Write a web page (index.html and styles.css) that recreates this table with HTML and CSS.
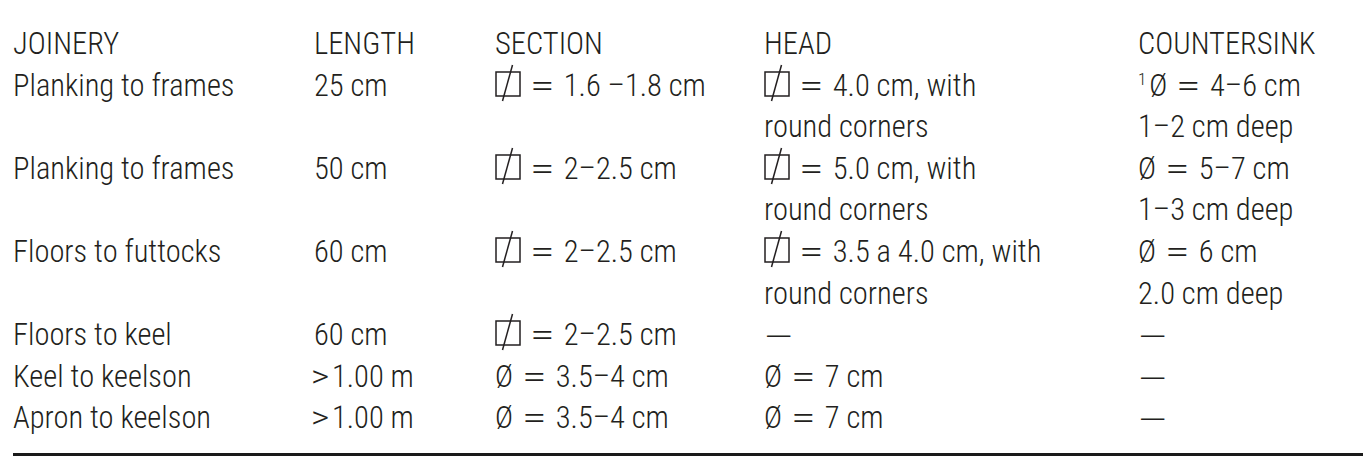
FILE: index.html
```html
<!DOCTYPE html>
<html lang="en">
<head>
<meta charset="utf-8">
<title>Joinery</title>
<link rel="stylesheet" href="styles.css">
</head>
<body>
<div class="table">
  <div class="grid">
    <div class="c">JOINERY</div>
    <div class="c">LENGTH</div>
    <div class="c">SECTION</div>
    <div class="c">HEAD</div>
    <div class="c">COUNTERSINK</div>

    <div class="c">Planking to frames</div>
    <div class="c">25 cm</div>
    <div class="c"><svg class="sq" width="26" height="36" viewBox="0 0 26 36"><rect x="1" y="7" width="24" height="24"/><line x1="17.5" y1="0" x2="7.5" y2="36"/></svg><span class="eq">=</span>1.6 –1.8 cm</div>
    <div class="c"><svg class="sq" width="26" height="36" viewBox="0 0 26 36"><rect x="1" y="7" width="24" height="24"/><line x1="17.5" y1="0" x2="7.5" y2="36"/></svg><span class="eq">=</span>4.0 cm, with<br>round corners</div>
    <div class="c"><sup class="fn">1</sup>Ø<span class="eq">=</span>4–6 cm<br>1–2 cm deep</div>

    <div class="c">Planking to frames</div>
    <div class="c">50 cm</div>
    <div class="c"><svg class="sq" width="26" height="36" viewBox="0 0 26 36"><rect x="1" y="7" width="24" height="24"/><line x1="17.5" y1="0" x2="7.5" y2="36"/></svg><span class="eq">=</span>2–2.5 cm</div>
    <div class="c"><svg class="sq" width="26" height="36" viewBox="0 0 26 36"><rect x="1" y="7" width="24" height="24"/><line x1="17.5" y1="0" x2="7.5" y2="36"/></svg><span class="eq">=</span>5.0 cm, with<br>round corners</div>
    <div class="c">Ø<span class="eq">=</span>5–7 cm<br>1–3 cm deep</div>

    <div class="c">Floors to futtocks</div>
    <div class="c">60 cm</div>
    <div class="c"><svg class="sq" width="26" height="36" viewBox="0 0 26 36"><rect x="1" y="7" width="24" height="24"/><line x1="17.5" y1="0" x2="7.5" y2="36"/></svg><span class="eq">=</span>2–2.5 cm</div>
    <div class="c"><svg class="sq" width="26" height="36" viewBox="0 0 26 36"><rect x="1" y="7" width="24" height="24"/><line x1="17.5" y1="0" x2="7.5" y2="36"/></svg><span class="eq">=</span>3.5 a 4.0 cm, with<br>round corners</div>
    <div class="c">Ø<span class="eq">=</span>6 cm<br>2.0 cm deep</div>

    <div class="c">Floors to keel</div>
    <div class="c">60 cm</div>
    <div class="c"><svg class="sq" width="26" height="36" viewBox="0 0 26 36"><rect x="1" y="7" width="24" height="24"/><line x1="17.5" y1="0" x2="7.5" y2="36"/></svg><span class="eq">=</span>2–2.5 cm</div>
    <div class="c"><span class="dash">—</span></div>
    <div class="c"><span class="dash">—</span></div>

    <div class="c">Keel to keelson</div>
    <div class="c"><span class="gt">&gt;</span>1.00 m</div>
    <div class="c">Ø<span class="eq">=</span>3.5–4 cm</div>
    <div class="c">Ø<span class="eq">=</span>7 cm</div>
    <div class="c"><span class="dash">—</span></div>

    <div class="c">Apron to keelson</div>
    <div class="c"><span class="gt">&gt;</span>1.00 m</div>
    <div class="c">Ø<span class="eq">=</span>3.5–4 cm</div>
    <div class="c">Ø<span class="eq">=</span>7 cm</div>
    <div class="c"><span class="dash">—</span></div>
  </div>
  <div class="rule"></div>
</div>
</body>
</html>
```

FILE: styles.css
```css
html, body {
  margin: 0;
  padding: 0;
  background: #ffffff;
}
body {
  padding: 23px 1px 0 13px;
  font-family: "Roboto Condensed", "Liberation Sans", Arial, sans-serif;
  font-weight: 350;
  font-size: 30.5px;
  line-height: 41.6px;
  color: #231f20;
}
.grid {
  display: grid;
  grid-template-columns: 301px 181px 269px 374px 1fr;
}
.c {
  white-space: nowrap;
}
.sq {
  width: 26px;
  height: 36px;
  vertical-align: -5px;
  overflow: visible;
}
.sq rect, .sq line {
  fill: none;
  stroke: #231f20;
  stroke-width: 1.5;
}
.eq {
  display: inline-block;
  padding: 0 14px;
  transform: scaleX(1.7);
}
.gt {
  display: inline-block;
  transform: scaleX(1.35);
  padding-right: 4px;
}
.dash {
  display: inline-block;
  transform: translateY(3px) scaleX(1.4);
  transform-origin: left center;
}
.fn {
  font-size: 17px;
  line-height: 0;
  vertical-align: 11px;
  padding-right: 3px;
}
.rule {
  margin-top: 14px;
  height: 3px;
  background: #1a1a1a;
}
```
